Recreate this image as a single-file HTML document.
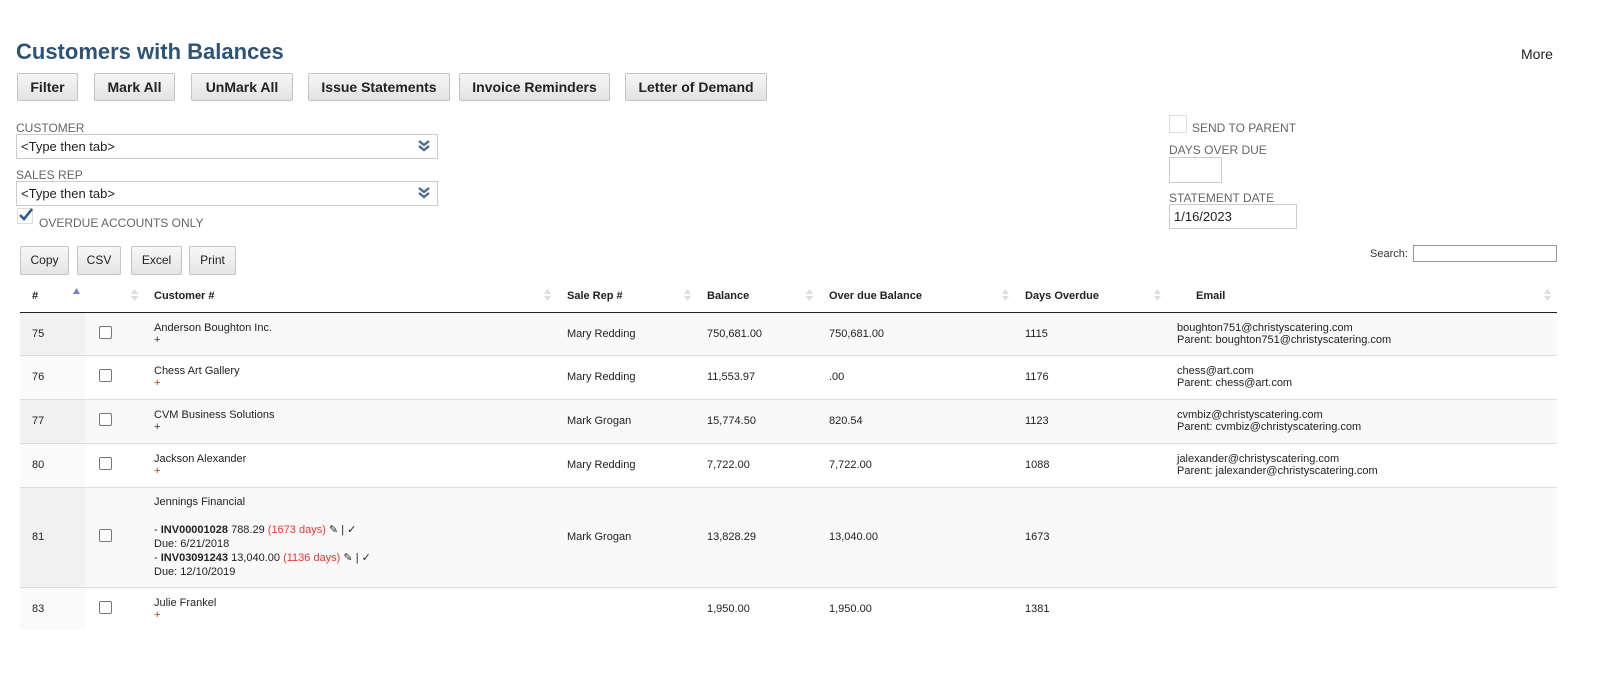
<!DOCTYPE html>
<html><head><meta charset="utf-8"><style>
*{box-sizing:border-box}
body{margin:0;width:1600px;height:673px;background:#fff;font-family:"Liberation Sans",Arial,sans-serif;color:#222;position:relative;overflow:hidden}
.abs{position:absolute}
h1{position:absolute;left:16px;top:39px;margin:0;font-size:22px;color:#2f5375;font-weight:bold}
.more{left:1521px;top:46px;font-size:14px;color:#222}
.btn{position:absolute;top:73px;height:28px;border:1px solid #c4c4c4;border-radius:2px;background:linear-gradient(#f6f6f6,#e2e2e2);font-weight:bold;font-size:14px;text-align:center;line-height:26px;color:#222}
.lbl{position:absolute;font-size:12px;color:#666}
.inp{position:absolute;border:1px solid #ccc;background:#fff;font-size:13px;padding-left:4px;line-height:23px}
.chev{position:absolute;right:7px;top:4px}
.tb{position:absolute;top:246px;height:29px;border:1px solid #c4c4c4;border-radius:2px;background:linear-gradient(#f8f8f8,#e4e4e4);font-size:12px;text-align:center;line-height:27px}
table{position:absolute;left:20px;top:280px;width:1537px;border-collapse:collapse;font-size:11px}
th{height:32px;text-align:left;font-weight:bold;font-size:11px;border-bottom:1.5px solid #222;position:relative;padding:0 0 0 12px}
td{padding:0 0 0 12px;border-top:1px solid #ddd;vertical-align:middle}
tr.g td{background:#f9f9f9}
tr.g td.s{background:#f1f1f1}
tr.w td.s{background:#fafafa}
.ar{position:absolute;right:4px;top:9px;width:7px}
.cb{display:inline-block;width:13px;height:13px;border:1px solid #777;border-radius:2px;background:#fff;margin-left:2px}
.r{color:#e33}
.pl{color:#333}
.pr{color:#a33}
</style></head><body>
<h1>Customers with Balances</h1>
<div class="abs more">More</div>
<div class="btn" style="left:17px;width:61px">Filter</div>
<div class="btn" style="left:94px;width:81px">Mark All</div>
<div class="btn" style="left:191px;width:102px">UnMark All</div>
<div class="btn" style="left:308px;width:142px">Issue Statements</div>
<div class="btn" style="left:459px;width:151px">Invoice Reminders</div>
<div class="btn" style="left:625px;width:142px">Letter of Demand</div>

<div class="lbl" style="left:16px;top:121px">CUSTOMER</div>
<div class="inp" style="left:16px;top:134px;width:422px;height:25px">&lt;Type then tab&gt;<svg class="chev" width="12" height="14" viewBox="0 0 12 14"><path d="M1 2l5 4 5-4M1 7l5 4 5-4" stroke="#4a6a8f" stroke-width="2.4" fill="none"/></svg></div>
<div class="lbl" style="left:16px;top:168px">SALES REP</div>
<div class="inp" style="left:16px;top:181px;width:422px;height:25px">&lt;Type then tab&gt;<svg class="chev" width="12" height="14" viewBox="0 0 12 14"><path d="M1 2l5 4 5-4M1 7l5 4 5-4" stroke="#4a6a8f" stroke-width="2.4" fill="none"/></svg></div>
<div class="abs" style="left:17px;top:208px;width:16px;height:16px;border:1px solid #ddd;background:#fff"><svg width="15" height="14" viewBox="0 0 15 14" style="position:absolute;left:0;top:-1px"><path d="M2 7l4 4 8-10" stroke="#2e5b93" stroke-width="2.6" fill="none"/></svg></div>
<div class="lbl" style="left:39px;top:216px">OVERDUE ACCOUNTS ONLY</div>

<div class="abs" style="left:1169px;top:115px;width:18px;height:18px;border:1px solid #ddd"></div>
<div class="lbl" style="left:1192px;top:121px">SEND TO PARENT</div>
<div class="lbl" style="left:1169px;top:143px">DAYS OVER DUE</div>
<div class="inp" style="left:1169px;top:157px;width:53px;height:26px"></div>
<div class="lbl" style="left:1169px;top:191px">STATEMENT DATE</div>
<div class="inp" style="left:1169px;top:204px;width:128px;height:25px">1/16/2023</div>

<div class="tb" style="left:20px;width:49px">Copy</div>
<div class="tb" style="left:77px;width:44px">CSV</div>
<div class="tb" style="left:131px;width:51px">Excel</div>
<div class="tb" style="left:189px;width:47px">Print</div>
<div class="abs" style="left:1370px;top:248px;font-size:11px;color:#333">Search:</div>
<div class="abs" style="left:1413px;top:245px;width:144px;height:17px;border:1px solid #999"></div>

<table>
<colgroup><col style="width:65px"><col style="width:57px"><col style="width:413px"><col style="width:140px"><col style="width:122px"><col style="width:196px"><col style="width:152px"><col style="width:392px"></colgroup>
<tr>
<th>#<svg class="ar" style="right:5px;top:8px" width="7" height="6"><path d="M0 6L3.5 0 7 6z" fill="#7b7bd6"/></svg></th>
<th><svg class="ar" width="7" height="12"><path d="M0 5L3.5 0 7 5zM0 7l3.5 5L7 7z" fill="#ddd"/></svg></th>
<th>Customer #<svg class="ar" width="7" height="12"><path d="M0 5L3.5 0 7 5zM0 7l3.5 5L7 7z" fill="#ddd"/></svg></th>
<th>Sale Rep #<svg class="ar" width="7" height="12"><path d="M0 5L3.5 0 7 5zM0 7l3.5 5L7 7z" fill="#ddd"/></svg></th>
<th>Balance<svg class="ar" width="7" height="12"><path d="M0 5L3.5 0 7 5zM0 7l3.5 5L7 7z" fill="#ddd"/></svg></th>
<th>Over due Balance<svg class="ar" width="7" height="12"><path d="M0 5L3.5 0 7 5zM0 7l3.5 5L7 7z" fill="#ddd"/></svg></th>
<th>Days Overdue<svg class="ar" width="7" height="12"><path d="M0 5L3.5 0 7 5zM0 7l3.5 5L7 7z" fill="#ddd"/></svg></th>
<th style="padding-left:31px">Email<svg class="ar" style="right:6px" width="7" height="12"><path d="M0 5L3.5 0 7 5zM0 7l3.5 5L7 7z" fill="#ddd"/></svg></th>
</tr>
<tr class="g" style="height:43px"><td class="s">75</td><td><span class="cb"></span></td><td>Anderson Boughton Inc.<br><span class="pl">+</span></td><td>Mary Redding</td><td>750,681.00</td><td>750,681.00</td><td>1115</td><td>boughton751@christyscatering.com<br>Parent: boughton751@christyscatering.com</td></tr>
<tr class="w" style="height:44px"><td class="s">76</td><td><span class="cb"></span></td><td>Chess Art Gallery<br><span class="pr">+</span></td><td>Mary Redding</td><td>11,553.97</td><td>.00</td><td>1176</td><td>chess@art.com<br>Parent: chess@art.com</td></tr>
<tr class="g" style="height:44px"><td class="s">77</td><td><span class="cb"></span></td><td>CVM Business Solutions<br><span class="pl">+</span></td><td>Mark Grogan</td><td>15,774.50</td><td>820.54</td><td>1123</td><td>cvmbiz@christyscatering.com<br>Parent: cvmbiz@christyscatering.com</td></tr>
<tr class="w" style="height:44px"><td class="s">80</td><td><span class="cb"></span></td><td>Jackson Alexander<br><span class="pr">+</span></td><td>Mary Redding</td><td>7,722.00</td><td>7,722.00</td><td>1088</td><td>jalexander@christyscatering.com<br>Parent: jalexander@christyscatering.com</td></tr>
<tr class="g" style="height:100px"><td class="s">81</td><td><span class="cb"></span></td><td style="line-height:14px">Jennings Financial<br><br>- <b>INV00001028</b> 788.29 <span class="r">(1673 days)</span> ✎ | ✓<br>Due: 6/21/2018<br>- <b>INV03091243</b> 13,040.00 <span class="r">(1136 days)</span> ✎ | ✓<br>Due: 12/10/2019</td><td>Mark Grogan</td><td>13,828.29</td><td>13,040.00</td><td>1673</td><td></td></tr>
<tr class="w" style="height:43px"><td class="s">83</td><td><span class="cb"></span></td><td>Julie Frankel<br><span class="pr">+</span></td><td></td><td>1,950.00</td><td>1,950.00</td><td>1381</td><td></td></tr>
</table>
</body></html>
